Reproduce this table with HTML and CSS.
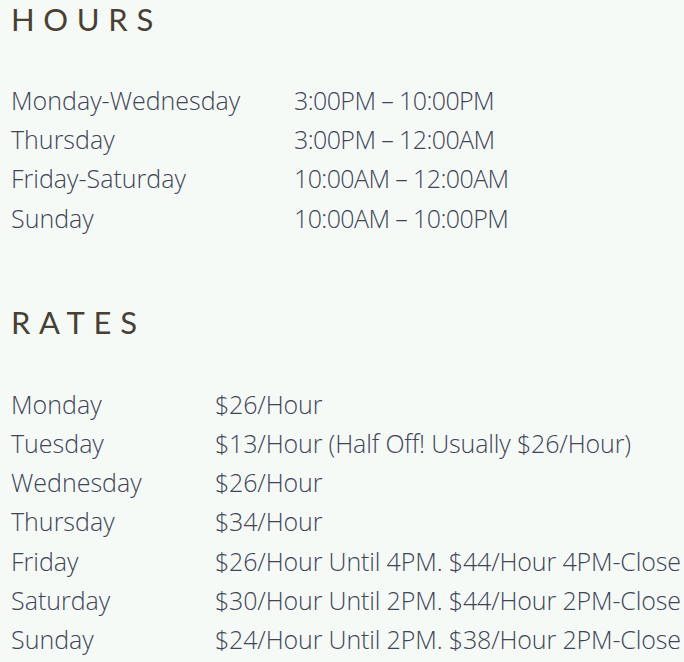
FILE: index.html
```html
<!DOCTYPE html>
<html lang="en">
<head>
<meta charset="utf-8">
<link rel="stylesheet" href="styles.css">
</head>
<body>
<section class="block">
  <h2 class="title">HOURS</h2>
  <div class="table hours">
    <div class="cell">Monday-Wednesday</div><div class="cell value">3:00PM – 10:00PM</div>
    <div class="cell">Thursday</div><div class="cell value">3:00PM – 12:00AM</div>
    <div class="cell">Friday-Saturday</div><div class="cell value">10:00AM – 12:00AM</div>
    <div class="cell">Sunday</div><div class="cell value">10:00AM – 10:00PM</div>
  </div>
</section>
<section class="block">
  <h2 class="title">RATES</h2>
  <div class="table rates">
    <div class="cell">Monday</div><div class="cell value">$26/Hour</div>
    <div class="cell">Tuesday</div><div class="cell value">$13/Hour (Half Off! Usually $26/Hour)</div>
    <div class="cell">Wednesday</div><div class="cell value">$26/Hour</div>
    <div class="cell">Thursday</div><div class="cell value">$34/Hour</div>
    <div class="cell">Friday</div><div class="cell value">$26/Hour Until 4PM. $44/Hour 4PM-Close</div>
    <div class="cell">Saturday</div><div class="cell value">$30/Hour Until 2PM. $44/Hour 2PM-Close</div>
    <div class="cell">Sunday</div><div class="cell value">$24/Hour Until 2PM. $38/Hour 2PM-Close</div>
  </div>
</section>
</body>
</html>
```
FILE: styles.css
```css
html, body {
  margin: 0;
  padding: 0;
  background: #f6faf7;
}
body {
  padding: 0 0 0 11px;
  font-family: "Open Sans", "Liberation Sans", sans-serif;
  font-weight: 300;
  color: #404457;
  overflow: hidden;
}
.block {
  display: flex;
  flex-direction: column;
}
.title {
  margin: 0;
  font-family: "Lato", "Liberation Sans", sans-serif;
  font-weight: 400;
  font-size: 31px;
  line-height: 38px;
  letter-spacing: 0.28em;
  color: #4a3f33;
}
.table {
  display: grid;
  font-size: 25px;
  line-height: 39.2px;
}
.hours {
  grid-template-columns: 283px auto;
  margin-top: 43px;
  margin-bottom: 65px;
}
.rates {
  grid-template-columns: 204px auto;
  margin-top: 44px;
}
.cell {
  white-space: nowrap;
}
.value {
  letter-spacing: -0.15px;
}
.hours .value {
  letter-spacing: -0.6px;
}
```
